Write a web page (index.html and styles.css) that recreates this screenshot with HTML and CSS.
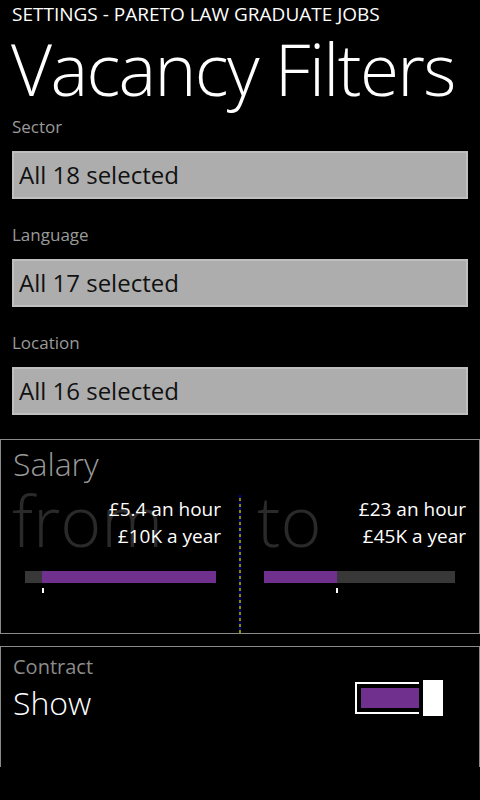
FILE: index.html
```html
<!DOCTYPE html>
<html lang="en">
<head>
  <meta charset="UTF-8" />
  <meta name="viewport" content="width=device-width, initial-scale=1.0"/>
  <title>Vacancy Filters</title>
  <link rel="stylesheet" href="styles.css">
</head>
<body>
  <div class="page">
    <div class="app-title">SETTINGS - PARETO LAW GRADUATE JOBS</div>
    <h1 class="page-title">Vacancy Filters</h1>

    <div class="filters">
      <div class="filter">
        <label>Sector</label>
        <div class="picker">All 18 selected</div>
      </div>
      <div class="filter">
        <label>Language</label>
        <div class="picker">All 17 selected</div>
      </div>
      <div class="filter">
        <label>Location</label>
        <div class="picker">All 16 selected</div>
      </div>
    </div>

    <section class="panel salary">
      <h2>Salary</h2>
      <div class="ranges">
        <div class="range range-from">
          <span class="watermark">from</span>
          <div class="amounts">
            <div>£5.4 an hour</div>
            <div>£10K a year</div>
          </div>
          <div class="slider">
            <div class="slider-fill" style="margin-left: 17px; width: 174px;"></div>
          </div>
          <div class="tick" style="margin-left: 41px;"></div>
        </div>

        <div class="divider"></div>

        <div class="range range-to">
          <span class="watermark">to</span>
          <div class="amounts">
            <div>£23 an hour</div>
            <div>£45K a year</div>
          </div>
          <div class="slider">
            <div class="slider-fill" style="width: 73px;"></div>
          </div>
          <div class="tick" style="margin-left: 95px;"></div>
        </div>
      </div>
    </section>

    <section class="panel contract">
      <div class="panel-label">Contract</div>
      <div class="switch-row">
        <span class="switch-text">Show</span>
        <div class="toggle">
          <div class="toggle-track"><div class="toggle-fill"></div></div>
          <div class="toggle-thumb"></div>
        </div>
      </div>
    </section>
  </div>
</body>
</html>
```

FILE: styles.css
```css
* {
  box-sizing: border-box;
  margin: 0;
  padding: 0;
}

body {
  font-family: 'Segoe UI', 'Open Sans', sans-serif;
  background: #000;
  color: #fff;
  width: 480px;
  height: 800px;
  overflow: hidden;
}

.app-title {
  font-size: 19px;
  line-height: 24px;
  padding: 2px 12px 0;
  white-space: nowrap;
}

.page-title {
  font-size: 71px;
  font-weight: 300;
  line-height: 74px;
  margin-top: 6px;
  padding-left: 11px;
  letter-spacing: -1.6px;
  white-space: nowrap;
}

/* dropdown style filters */
.filters {
  display: flex;
  flex-direction: column;
  gap: 26px;
  margin-top: 11px;
  padding: 0 12px;
}

.filter label {
  display: block;
  font-size: 17px;
  line-height: 20px;
  color: #9a9a9a;
  margin-bottom: 14px;
}

.picker {
  height: 48px;
  background: #adadad;
  border: 2px solid #bfbfbf;
  color: #111;
  font-size: 24px;
  line-height: 44px;
  padding-left: 5px;
}

.panel {
  border: 1px solid #8a8a8a;
}

.salary {
  margin-top: 24px;
  height: 195px;
  display: flex;
  flex-direction: column;
}

.salary h2 {
  font-size: 32px;
  font-weight: 300;
  line-height: 36px;
  color: #999;
  padding: 6px 12px 0;
}

.ranges {
  flex: 1;
  display: grid;
  grid-template-columns: 1fr 2px 1fr;
  margin-top: 13px;
}

.range {
  position: relative;
}

.watermark {
  position: absolute;
  top: -25px;
  font-size: 70px;
  font-weight: 300;
  color: #2a2a2a;
  line-height: 100px;
}

.range-from .watermark { left: 11px; }
.range-to .watermark { left: 16px; }

.amounts {
  position: relative;
  text-align: right;
  font-size: 19px;
  line-height: 27px;
  padding-top: 1px;
}

.range-from .amounts { padding-right: 18px; }
.range-to .amounts { padding-right: 13px; }

.slider {
  display: flex;
  width: 191px;
  height: 12px;
  margin-top: 21px;
  background: #383838;
}

.range-from .slider { margin-left: 24px; }
.range-to .slider { margin-left: 23px; }

.slider-fill {
  height: 100%;
  background: #70308e;
}

.tick {
  width: 2px;
  height: 5px;
  margin-top: 5px;
  background: #fff;
}

.divider {
  background: repeating-linear-gradient(to bottom, #00008b 0 3px, #8b8b00 3px 6px);
}

.contract {
  margin-top: 12px;
  height: 121px;
  border-bottom: none;
  padding: 8px 0 0 12px;
}

.panel-label {
  font-size: 20px;
  line-height: 24px;
  color: #8c8c8c;
}

.switch-row {
  display: flex;
  justify-content: space-between;
  align-items: flex-start;
  padding-right: 36px;
}

.switch-text {
  margin-top: 4px;
  font-size: 32px;
  font-weight: 300;
  line-height: 40px;
}

.toggle {
  display: flex;
  align-items: center;
  gap: 4px;
  margin-top: 1px;
}

.toggle-track {
  width: 64px;
  height: 32px;
  border: 2px solid #fff;
  border-right: none;
  padding: 4px 0 4px 4px;
}

.toggle-fill {
  height: 100%;
  background: #70308e;
}

.toggle-thumb {
  width: 20px;
  height: 36px;
  background: #fff;
}
```
